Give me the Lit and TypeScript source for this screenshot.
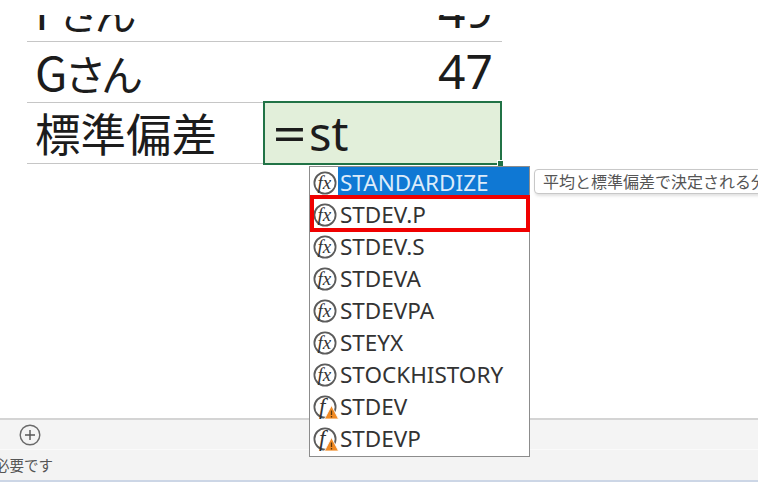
import { LitElement, css, html, svg } from 'lit';
import { customElement } from 'lit/decorators.js';

const FUNCS = [
  { name: 'STANDARDIZE', warn: false },
  { name: 'STDEV.P', warn: false },
  { name: 'STDEV.S', warn: false },
  { name: 'STDEVA', warn: false },
  { name: 'STDEVPA', warn: false },
  { name: 'STEYX', warn: false },
  { name: 'STOCKHISTORY', warn: false },
  { name: 'STDEV', warn: true },
  { name: 'STDEVP', warn: true },
];

const fxIcon = (warn: boolean) => html`
  <svg class="fx" width="26" height="28" viewBox="0 0 26 28">
    <circle cx="12" cy="14" r="10.600" fill="#fff" stroke="#5c5c5c" stroke-width="1.800"></circle>
    ${warn
      ? svg`<text class="glyph" x="6" y="20.500" font-size="23">f</text>
            <path d="M18.500 12.500l7 13.500h-14z" fill="#f08a24" stroke="#fff" stroke-width=".8"></path>
            <path d="M18.500 17.500v4.500M18.500 23v1.500" stroke="#5a3a10" stroke-width="1.300"></path>`
      : svg`<text class="glyph" x="4.500" y="20" font-size="19">fx</text>`}
  </svg>`;

@customElement('app-root')
export class AppRoot extends LitElement {
  static styles = css`
    :host {
      display: block;
      width: 768px;
      height: 495px;
      background: #fff;
      position: relative;
      overflow: hidden;
      font-family: 'Noto Sans CJK JP', 'Noto Sans', sans-serif;
      color: #1c1c1c;
    }
    .sheet {
      height: 418px;
      box-sizing: border-box;
      padding-top: 15px;
    }
    .clip {
      height: 403px;
      overflow: hidden;
    }
    .table {
      margin: -34px 0 0 27px;
      width: 475px;
    }
    .row {
      height: 61px;
      box-sizing: border-box;
      border-bottom: 1px solid #c6c6c6;
      display: grid;
      grid-template-columns: 236px 239px;
      grid-template-rows: 60px;
      align-items: start;
      font-size: 45.500px;
      line-height: 58px;
    }
    .label {
      padding-left: 8px;
      white-space: nowrap;
      height: 58px;
    }
    .latin {
      font-size: 47px;
      letter-spacing: -3px;
    }
    .kana {
      font-size: 42px;
      letter-spacing: -5.500px;
    }
    .num {
      text-align: right;
      padding-right: 9px;
      font-family: 'Noto Sans', sans-serif;
      font-size: 48px;
      height: 58px;
    }
    .edit {
      margin-top: -2px;
      height: 64px;
      box-sizing: border-box;
      border: 2px solid #217346;
      background: #e2efda;
      padding-left: 11px;
      font-family: 'Noto Sans', sans-serif;
      font-size: 47px;
      line-height: 60px;
      position: relative;
    }
    .eq {
      margin-right: 6px;
      display: inline-block;
      transform: scaleX(1.250);
    }
    .handle {
      position: absolute;
      right: -3px;
      bottom: -3px;
      width: 5px;
      height: 5px;
      background: #217346;
      border-left: 1px solid #fff;
      border-top: 1px solid #fff;
    }
    .menu {
      position: absolute;
      left: 309px;
      top: 166px;
      width: 221px;
      height: 291px;
      box-sizing: border-box;
      border: 1px solid #8c8c8c;
      background: #fff;
      font-family: 'Noto Sans', sans-serif;
      font-size: 22.500px;
      color: #333;
    }
    .item {
      height: 32px;
      display: flex;
      align-items: center;
      padding-left: 3px;
      white-space: nowrap;
    }
    .item .fx {
      flex: none;
      margin-right: -1px;
    }
    .glyph {
      font-family: 'Liberation Serif', serif;
      font-style: italic;
      fill: #333;
    }
    .item .text {
      height: 100%;
      flex: 1;
      line-height: 31px;
      padding-left: 2px;
    }
    .item.active .text {
      background: #0f78d4;
      color: #dcebfa;
    }
    .mark {
      position: absolute;
      left: 310px;
      top: 195px;
      width: 220px;
      height: 37px;
      box-sizing: border-box;
      border: 4px solid #f00000;
    }
    .tip {
      position: absolute;
      left: 534px;
      top: 169px;
      width: 240px;
      height: 25px;
      box-sizing: border-box;
      border: 1px solid #c8c8c8;
      border-radius: 4px;
      background: #fff;
      box-shadow: 1px 2px 3px rgba(0, 0, 0, 0.12);
      padding-left: 8px;
      font-size: 16px;
      line-height: 22px;
      color: #555;
      white-space: nowrap;
      overflow: hidden;
    }
    .edge {
      position: absolute;
      left: 758px;
      top: 0;
      width: 10px;
      height: 495px;
      background: #fff;
    }
    .tabs {
      height: 31px;
      box-sizing: border-box;
      background: #f4f4f4;
      border-top: 2px solid #d4d4d4;
      display: flex;
      align-items: center;
      padding-left: 19px;
    }
    .status {
      height: 33px;
      box-sizing: border-box;
      border-top: 1px solid #fafafa;
      border-bottom: 2px solid #ccd6e6;
      background: #f3f3f3;
      font-size: 14.500px;
      line-height: 30px;
      color: #555;
      white-space: nowrap;
      overflow: hidden;
    }
    .status span {
      display: block;
      margin-left: -5px;
    }
  `;

  render() {
    return html`
      <div class="sheet">
        <div class="clip">
          <div class="table">
            <div class="row">
              <div class="label"><span class="latin">F</span><span class="kana">さん</span></div>
              <div class="num">49</div>
            </div>
            <div class="row">
              <div class="label"><span class="latin">G</span><span class="kana">さん</span></div>
              <div class="num">47</div>
            </div>
            <div class="row">
              <div class="label">標準偏差</div>
              <div class="edit"><span class="eq">=</span>st<span class="handle"></span></div>
            </div>
          </div>
        </div>
      </div>
      <div class="tabs">
        <svg width="22" height="22" viewBox="0 0 22 22">
          <circle cx="11" cy="11" r="9.800" fill="none" stroke="#6a6a6a" stroke-width="1.400"></circle>
          <path d="M11 6v10M6 11h10" stroke="#555" stroke-width="1.400"></path>
        </svg>
      </div>
      <div class="status"><span>必要です</span></div>
      <div class="menu">
        ${FUNCS.map(
          (f, i) => html`
            <div class="item ${i === 0 ? 'active' : ''}">
              ${fxIcon(f.warn)}<span class="text">${f.name}</span>
            </div>
          `
        )}
      </div>
      <div class="mark"></div>
      <div class="tip">平均と標準偏差で決定される分布</div>
      <div class="edge"></div>
    `;
  }
}
